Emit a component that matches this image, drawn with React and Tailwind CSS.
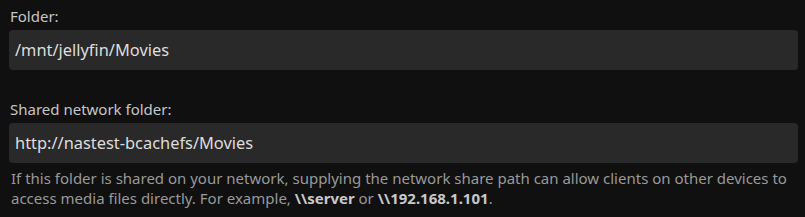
import React from 'react';

function Field({ label, value, className = '' }) {
  return (
    <div className={className}>
      <label className="block text-[15px] leading-5 text-[#c6c6c6] pl-px">{label}</label>
      <div className="mt-1 h-10 rounded-[4px] bg-[#292929] flex items-center px-1.5 text-[16.4px] text-[#dedede]">
        {value}
      </div>
    </div>
  );
}

export default function App() {
  return (
    <div className="w-[805px] h-[217px] bg-[#101010] pl-[9px] pr-[7px] pt-[6px]" style={{ fontFamily: '"Noto Sans", sans-serif' }}>
      <Field label="Folder:" value="/mnt/jellyfin/Movies" />
      <Field className="mt-[29px]" label="Shared network folder:" value="http://nastest-bcachefs/Movies" />
      <p className="mt-[5px] pl-[2px] text-[15px] leading-5 text-[#999999]">
        If this folder is shared on your network, supplying the network share path can allow clients on other devices to access media files directly. For example, <b className="text-[#c8c8c8] font-bold">\\server</b> or <b className="text-[#c8c8c8] font-bold">\\192.168.1.101</b>.
      </p>
    </div>
  );
}
